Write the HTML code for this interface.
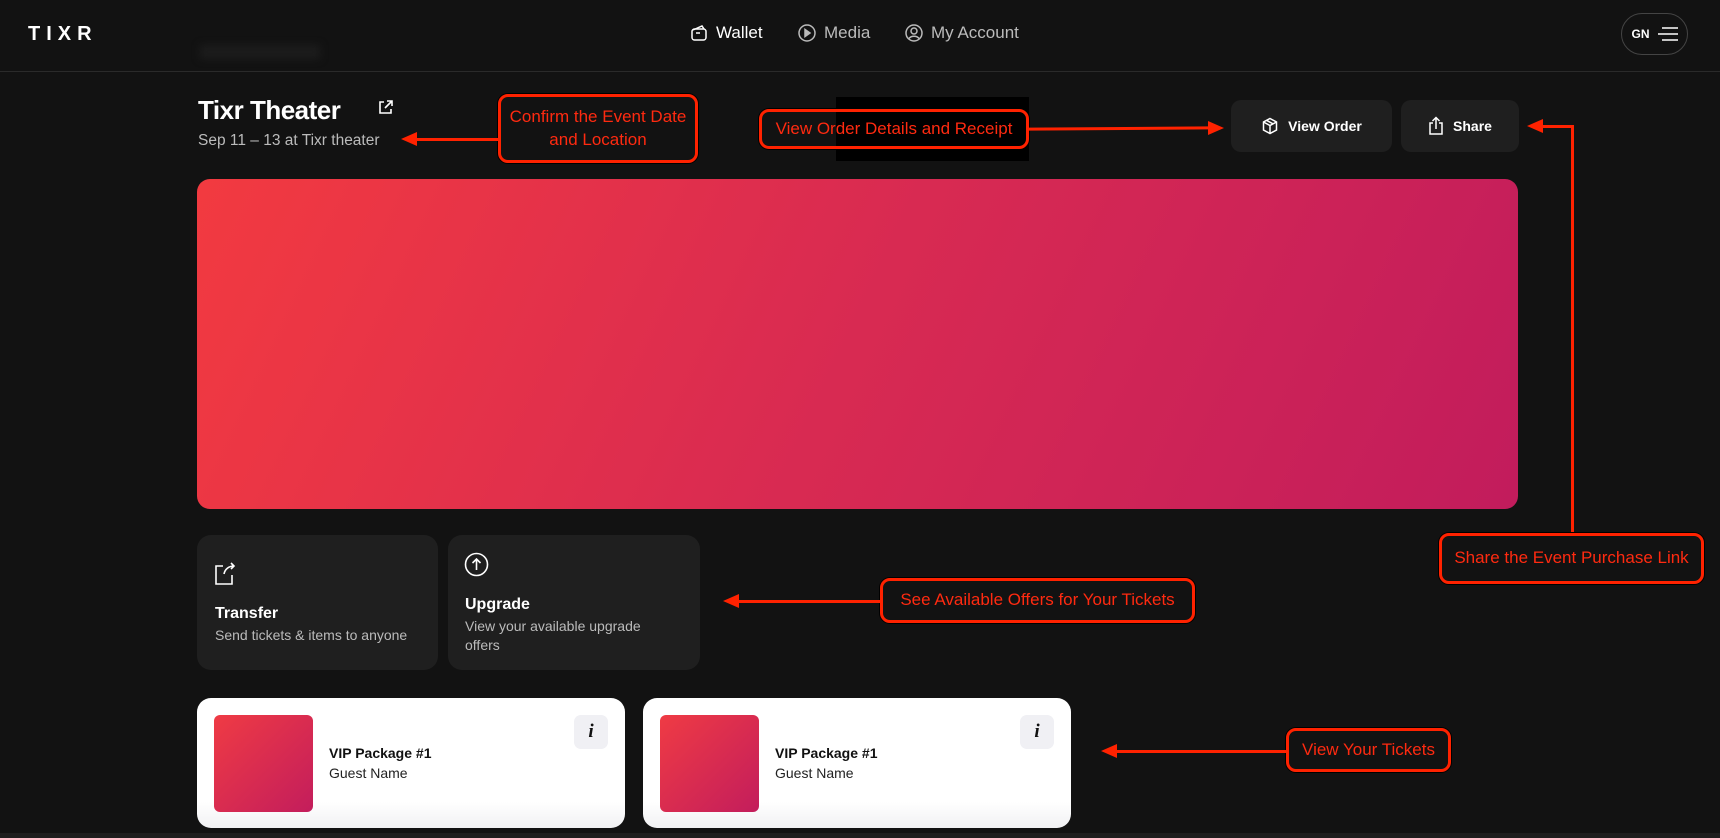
<!DOCTYPE html>
<html><head><meta charset="utf-8"><style>
*{margin:0;padding:0;box-sizing:border-box}
body{width:1720px;height:838px;background:#121212;font-family:"Liberation Sans",sans-serif;color:#fff;position:relative;overflow:hidden}
.a{position:absolute}
.hdr{left:0;top:0;width:1720px;height:72px;border-bottom:1px solid #2a2a2a}
.nav{font-size:17px;top:23px;display:flex;align-items:center;gap:7px}
.btn{background:#1f1f1f;border-radius:10px;display:flex;align-items:center;justify-content:center;gap:9px;font-weight:bold;font-size:14px}
.card{background:#1f1f1f;border-radius:14px}
.ann{border:3px solid #ff2200;border-radius:10px;color:#ff2a10;font-family:"Liberation Sans",sans-serif;font-size:16px;display:flex;align-items:center;justify-content:center;text-align:center;line-height:1.3;box-shadow:0 0 0 1px #000}
.ln{background:#ff2200}
.tri{width:0;height:0;border-top:7px solid transparent;border-bottom:7px solid transparent}
.tk{background:linear-gradient(#fff 80%,#f1f1f3);border-radius:14px}
.ti{border-radius:6px;background:linear-gradient(135deg,#ef3b44,#c31d5c)}
.inf{background:#f0f0f4;border-radius:7px;font-family:"Liberation Serif",serif;font-style:italic;font-weight:bold;color:#111;font-size:19px;display:flex;align-items:center;justify-content:center}
</style></head><body>
<div class="a hdr"></div>
<div class="a" style="left:28px;top:23px;font-size:20px;font-weight:bold;letter-spacing:6px">TIXR</div>
<div class="a" style="left:200px;top:45px;width:120px;height:14px;background:#1c1c1c;filter:blur(4px)"></div>
<div class="a nav" style="left:689px"><svg width="20" height="20" viewBox="0 0 20 20" fill="none" stroke="#fff" stroke-width="1.5"><rect x="3" y="6" width="14" height="11" rx="2.5"/><path d="M4 7 L13 3 L15 6"/><path d="M7 10h4"/></svg><span style="color:#fff">Wallet</span></div>
<div class="a nav" style="left:797px;color:#bbb"><svg width="20" height="20" viewBox="0 0 20 20" fill="none" stroke="#bbb" stroke-width="1.5"><circle cx="10" cy="10" r="8"/><path d="M8 6.5v7l5-3.5z" fill="#bbb"/></svg><span>Media</span></div>
<div class="a nav" style="left:904px;color:#bbb"><svg width="20" height="20" viewBox="0 0 20 20" fill="none" stroke="#bbb" stroke-width="1.5"><circle cx="10" cy="10" r="8"/><circle cx="10" cy="8" r="3"/><path d="M5 15.5c2-3 8-3 10 0"/></svg><span>My Account</span></div>
<div class="a" style="left:1621px;top:13px;width:67px;height:42px;border:1px solid #444;border-radius:21px;display:flex;align-items:center;justify-content:center;gap:8px;font-size:12px;font-weight:bold">GN<svg width="20" height="16" viewBox="0 0 20 16" stroke="#fff" stroke-width="1.6"><path d="M4 2h16M0 8h20M4 14h16"/></svg></div>

<div class="a" style="left:198px;top:95px;font-size:26px;font-weight:bold;letter-spacing:-0.5px">Tixr Theater</div>
<svg class="a" style="left:377px;top:99px" width="17" height="17" viewBox="0 0 17 17" fill="none" stroke="#fff" stroke-width="1.6"><path d="M7 3H3v11h11v-4M10 2h5v5M15 2L8 9"/></svg>
<div class="a" style="left:198px;top:132px;font-size:15.5px;color:#bbb">Sep 11 – 13 at Tixr theater</div>

<div class="a ann" style="left:498px;top:94px;width:200px;height:69px;font-size:17px">Confirm the Event Date<br>and Location</div>
<div class="a ln" style="left:415px;top:138px;width:83px;height:3px"></div>
<div class="a tri" style="left:401px;top:132px;border-right:16px solid #ff2200"></div>

<div class="a" style="left:836px;top:97px;width:193px;height:64px;background:#000"></div>
<div class="a ann" style="left:759px;top:109px;width:270px;height:40px;font-size:17px">View Order Details and Receipt</div>
<div class="a ln" style="left:1029px;top:127px;width:180px;height:3px;transform:rotate(-0.4deg)"></div>
<div class="a tri" style="left:1208px;top:121px;border-left:16px solid #ff2200"></div>

<div class="a btn" style="left:1231px;top:100px;width:161px;height:52px"><svg width="18" height="18" viewBox="0 0 18 18" fill="none" stroke="#fff" stroke-width="1.5"><path d="M9 1.5l6.5 3.5v8L9 16.5 2.5 13V5z"/><path d="M2.5 5L9 8.5 15.5 5M9 8.5v8M5.5 3.3l6.5 3.5"/></svg>View Order</div>
<div class="a btn" style="left:1401px;top:100px;width:118px;height:52px"><svg width="16" height="20" viewBox="0 0 16 20" fill="none" stroke="#fff" stroke-width="1.5"><path d="M5 7H2v11h12V7h-3M8 13V2M4.5 5L8 1.5 11.5 5"/></svg>Share</div>

<div class="a ln" style="left:1540px;top:125px;width:34px;height:3px"></div>
<div class="a tri" style="left:1527px;top:119px;border-right:16px solid #ff2200"></div>
<div class="a ln" style="left:1571px;top:125px;width:3px;height:409px"></div>
<div class="a ann" style="left:1439px;top:533px;width:265px;height:51px;font-size:17px">Share the Event Purchase Link</div>

<div class="a" style="left:197px;top:179px;width:1321px;height:330px;border-radius:13px;background:linear-gradient(115deg,#f23a40,#d82a52 50%,#c21c5c)"></div>

<div class="a card" style="left:197px;top:535px;width:241px;height:135px"></div>
<svg class="a" style="left:213px;top:561px" width="26" height="26" viewBox="0 0 26 26" fill="none" stroke="#fff" stroke-width="1.6"><path d="M10 5H3v18h16v-9"/><path d="M11 13c1-5 5-8 10-8M18 2l3 3-3 3"/></svg>
<div class="a" style="left:215px;top:605px;font-size:16px;font-weight:bold">Transfer</div>
<div class="a" style="left:215px;top:627px;font-size:14px;color:#bbb">Send tickets &amp; items to anyone</div>

<div class="a card" style="left:448px;top:535px;width:252px;height:135px"></div>
<svg class="a" style="left:464px;top:552px" width="25" height="25" viewBox="0 0 25 25" fill="none" stroke="#fff" stroke-width="1.6"><circle cx="12.5" cy="12.5" r="11"/><path d="M12.5 18V7M8.5 11l4-4 4 4"/></svg>
<div class="a" style="left:465px;top:596px;font-size:16px;font-weight:bold">Upgrade</div>
<div class="a" style="left:465px;top:617px;font-size:14px;color:#bbb;line-height:19px;width:200px">View your available upgrade offers</div>

<div class="a ann" style="left:880px;top:578px;width:315px;height:45px;font-size:17px">See Available Offers for Your Tickets</div>
<div class="a ln" style="left:738px;top:600px;width:142px;height:3px"></div>
<div class="a tri" style="left:723px;top:594px;border-right:16px solid #ff2200"></div>

<div class="a tk" style="left:197px;top:698px;width:428px;height:130px"></div>
<div class="a ti" style="left:214px;top:715px;width:99px;height:97px"></div>
<div class="a" style="left:329px;top:745px;font-size:14px;font-weight:bold;color:#111">VIP Package #1</div>
<div class="a" style="left:329px;top:765px;font-size:14px;color:#222">Guest Name</div>
<div class="a inf" style="left:574px;top:715px;width:34px;height:34px">i</div>

<div class="a tk" style="left:643px;top:698px;width:428px;height:130px"></div>
<div class="a ti" style="left:660px;top:715px;width:99px;height:97px"></div>
<div class="a" style="left:775px;top:745px;font-size:14px;font-weight:bold;color:#111">VIP Package #1</div>
<div class="a" style="left:775px;top:765px;font-size:14px;color:#222">Guest Name</div>
<div class="a inf" style="left:1020px;top:715px;width:34px;height:34px">i</div>

<div class="a ann" style="left:1286px;top:728px;width:165px;height:44px;font-size:17px">View Your Tickets</div>
<div class="a ln" style="left:1116px;top:750px;width:170px;height:3px"></div>
<div class="a tri" style="left:1101px;top:744px;border-right:16px solid #ff2200"></div>
<div class="a" style="left:0;top:833px;width:1720px;height:5px;background:#1e1e1e"></div>
</body></html>
